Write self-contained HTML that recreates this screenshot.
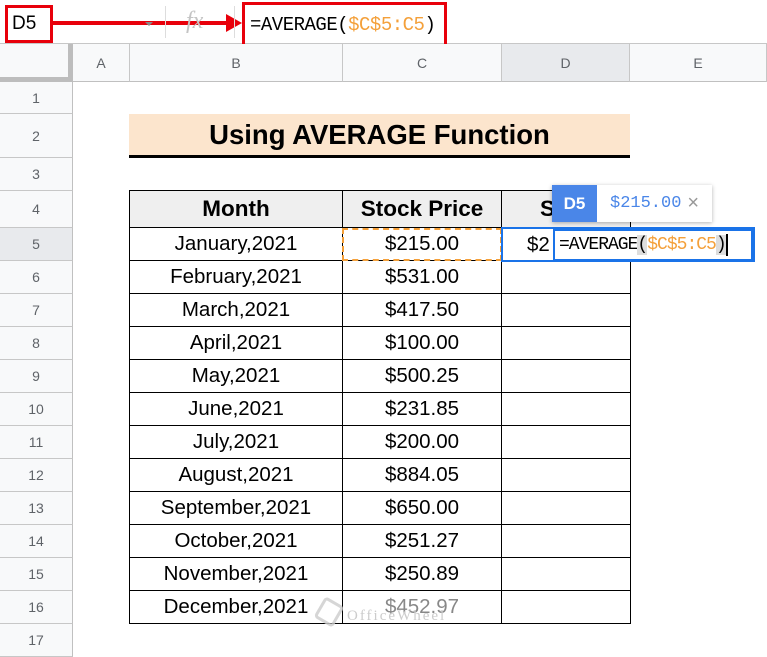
<!DOCTYPE html>
<html><head><meta charset="utf-8"><style>
*{box-sizing:border-box;margin:0;padding:0}
body{width:767px;height:656px;overflow:hidden;background:#fff;font-family:"Liberation Sans",Arial,sans-serif;position:relative}
.a{position:absolute}
.rh{position:absolute;left:0;width:73px;background:#f8f9fa;border-right:1px solid #c0c0c0;border-bottom:1px solid #c7c7c7;color:#5f6368;font-size:14px;display:flex;align-items:center;justify-content:center}
.ch{position:absolute;top:44px;height:38px;background:#f8f9fa;border-right:1px solid #c7c7c7;border-bottom:1px solid #c0c0c0;color:#5f6368;font-size:14px;display:flex;align-items:center;justify-content:center}
.c{position:absolute;display:flex;align-items:center;justify-content:center;font-size:20.5px;color:#000;border-right:1.5px solid #000;border-bottom:1.5px solid #000}
.h{font-weight:bold;font-size:22.5px;background:#efefef}
.mono{font-family:"Liberation Mono",monospace}
</style></head><body>
<div class="a" style="left:0;top:0;width:767px;height:44px;border-bottom:1px solid #c7c7c7;background:#fff"></div>
<div class="a" style="left:5px;top:5px;width:48px;height:38px;border:3px solid #e8000b;font-size:19px;display:flex;align-items:center;padding-left:4px">D5</div>
<div class="a" style="left:53px;top:21px;width:178px;height:4px;background:#e8000b"></div>
<div class="a" style="left:226px;top:14px;width:0;height:0;border-top:9px solid transparent;border-bottom:9px solid transparent;border-left:16px solid #e8000b"></div>
<div class="a" style="left:145px;top:22px;width:0;height:0;border-left:4px solid transparent;border-right:4px solid transparent;border-top:4px solid #888"></div>
<div class="a" style="left:165px;top:6px;width:1px;height:32px;background:#ddd"></div>
<div class="a" style="left:186px;top:8px;font-family:'Liberation Serif',serif;font-style:italic;font-size:24px;color:#c4c4c4">fx</div>
<div class="a" style="left:234px;top:6px;width:1px;height:32px;background:#ddd"></div>
<div class="a mono" style="left:242px;top:2px;width:205px;height:45px;border:3px solid #e8000b;font-size:19px;display:flex;align-items:center;padding-left:5px;letter-spacing:-0.5px">=AVERAGE(<span style="color:#f4a03a">$C$5:C5</span>)</div>
<div class="a" style="left:0;top:44px;width:73px;height:38px;background:#f8f9fa;border-right:5px solid #bdbdbd;border-bottom:5px solid #bdbdbd"></div>
<div class="ch" style="left:73px;width:57px">A</div>
<div class="ch" style="left:130px;width:213px">B</div>
<div class="ch" style="left:343px;width:159px">C</div>
<div class="ch" style="left:502px;width:128px;background:#e8eaed">D</div>
<div class="ch" style="left:630px;width:137px">E</div>
<div class="rh" style="top:82px;height:32px">1</div>
<div class="rh" style="top:114px;height:44px">2</div>
<div class="rh" style="top:158px;height:33px">3</div>
<div class="rh" style="top:191px;height:37px">4</div>
<div class="rh" style="top:228px;height:33px;background:#e8eaed">5</div>
<div class="rh" style="top:261px;height:33px">6</div>
<div class="rh" style="top:294px;height:33px">7</div>
<div class="rh" style="top:327px;height:33px">8</div>
<div class="rh" style="top:360px;height:33px">9</div>
<div class="rh" style="top:393px;height:33px">10</div>
<div class="rh" style="top:426px;height:33px">11</div>
<div class="rh" style="top:459px;height:33px">12</div>
<div class="rh" style="top:492px;height:33px">13</div>
<div class="rh" style="top:525px;height:33px">14</div>
<div class="rh" style="top:558px;height:33px">15</div>
<div class="rh" style="top:591px;height:33px">16</div>
<div class="rh" style="top:624px;height:33px">17</div>
<div class="a" style="left:129px;top:114px;width:501px;height:42px;background:#fce5cd;font-weight:bold;font-size:27.5px;display:flex;align-items:center;justify-content:center">Using AVERAGE Function</div>
<div class="a" style="left:129px;top:155px;width:501px;height:3px;background:#000"></div>
<div class="a" style="left:129px;top:190px;width:502px;height:434px;border-left:1.5px solid #000;border-top:1.5px solid #000"></div>
<div class="c h" style="left:130px;top:191px;width:213px;height:37px">Month</div>
<div class="c h" style="left:343px;top:191px;width:159px;height:37px">Stock Price</div>
<div class="c h" style="left:502px;top:191px;width:129px;height:37px;justify-content:flex-start;padding-left:38px">S</div>
<div class="c" style="left:130px;top:228px;width:213px;height:33px">January,2021</div>
<div class="c" style="left:343px;top:228px;width:159px;height:33px">$215.00</div>
<div class="c" style="left:502px;top:228px;width:129px;height:33px"></div>
<div class="c" style="left:130px;top:261px;width:213px;height:33px">February,2021</div><div class="c" style="left:343px;top:261px;width:159px;height:33px">$531.00</div><div class="c" style="left:502px;top:261px;width:129px;height:33px"></div>
<div class="c" style="left:130px;top:294px;width:213px;height:33px">March,2021</div><div class="c" style="left:343px;top:294px;width:159px;height:33px">$417.50</div><div class="c" style="left:502px;top:294px;width:129px;height:33px"></div>
<div class="c" style="left:130px;top:327px;width:213px;height:33px">April,2021</div><div class="c" style="left:343px;top:327px;width:159px;height:33px">$100.00</div><div class="c" style="left:502px;top:327px;width:129px;height:33px"></div>
<div class="c" style="left:130px;top:360px;width:213px;height:33px">May,2021</div><div class="c" style="left:343px;top:360px;width:159px;height:33px">$500.25</div><div class="c" style="left:502px;top:360px;width:129px;height:33px"></div>
<div class="c" style="left:130px;top:393px;width:213px;height:33px">June,2021</div><div class="c" style="left:343px;top:393px;width:159px;height:33px">$231.85</div><div class="c" style="left:502px;top:393px;width:129px;height:33px"></div>
<div class="c" style="left:130px;top:426px;width:213px;height:33px">July,2021</div><div class="c" style="left:343px;top:426px;width:159px;height:33px">$200.00</div><div class="c" style="left:502px;top:426px;width:129px;height:33px"></div>
<div class="c" style="left:130px;top:459px;width:213px;height:33px">August,2021</div><div class="c" style="left:343px;top:459px;width:159px;height:33px">$884.05</div><div class="c" style="left:502px;top:459px;width:129px;height:33px"></div>
<div class="c" style="left:130px;top:492px;width:213px;height:33px">September,2021</div><div class="c" style="left:343px;top:492px;width:159px;height:33px">$650.00</div><div class="c" style="left:502px;top:492px;width:129px;height:33px"></div>
<div class="c" style="left:130px;top:525px;width:213px;height:33px">October,2021</div><div class="c" style="left:343px;top:525px;width:159px;height:33px">$251.27</div><div class="c" style="left:502px;top:525px;width:129px;height:33px"></div>
<div class="c" style="left:130px;top:558px;width:213px;height:33px">November,2021</div><div class="c" style="left:343px;top:558px;width:159px;height:33px">$250.89</div><div class="c" style="left:502px;top:558px;width:129px;height:33px"></div>
<div class="c" style="left:130px;top:591px;width:213px;height:33px">December,2021</div><div class="c" style="left:343px;top:591px;width:159px;height:33px;color:#888">$452.97</div><div class="c" style="left:502px;top:591px;width:129px;height:33px"></div>
<div class="a" style="left:318px;top:600px;width:22px;height:24px;border:3px solid #ccc;border-radius:4px;transform:rotate(30deg);opacity:.8"></div>
<div class="a" style="left:347px;top:608px;font-family:'Liberation Serif',serif;font-size:15px;color:#ccc;letter-spacing:2px">OfficeWheel</div>
<div class="a" style="left:342px;top:228px;width:160px;height:33px;border:2px dashed #f4a03a"></div>
<div class="a" style="left:501px;top:227px;width:254px;height:35px;border:2px solid #1a73e8"></div>
<div class="a" style="left:527px;top:228px;height:33px;font-size:20.5px;display:flex;align-items:center">$2</div>
<div class="a mono" style="left:553px;top:229px;width:200px;height:32px;background:#fff;border:2px solid #1a73e8;font-size:18px;display:flex;align-items:center;padding-left:4px;letter-spacing:-1px">=AVERAGE<span style="background:#ddd">(</span><span style="color:#f4a03a">$C$5:C5</span><span style="background:#ddd">)</span><span style="width:2px;height:22px;background:#000;display:inline-block"></span></div>
<div class="a" style="left:552px;top:185px;width:160px;height:37px;background:#fff;box-shadow:0 1px 4px rgba(0,0,0,.3)"></div>
<div class="a" style="left:552px;top:185px;width:45px;height:37px;background:#4a86e8;color:#fff;font-weight:bold;font-size:17px;display:flex;align-items:center;justify-content:center">D5</div>
<div class="a mono" style="left:610px;top:185px;height:37px;font-size:17px;color:#4a86e8;display:flex;align-items:center">$215.00 <span style="color:#999;font-family:'Liberation Sans';font-size:20px;margin-left:6px">×</span></div>
</body></html>
